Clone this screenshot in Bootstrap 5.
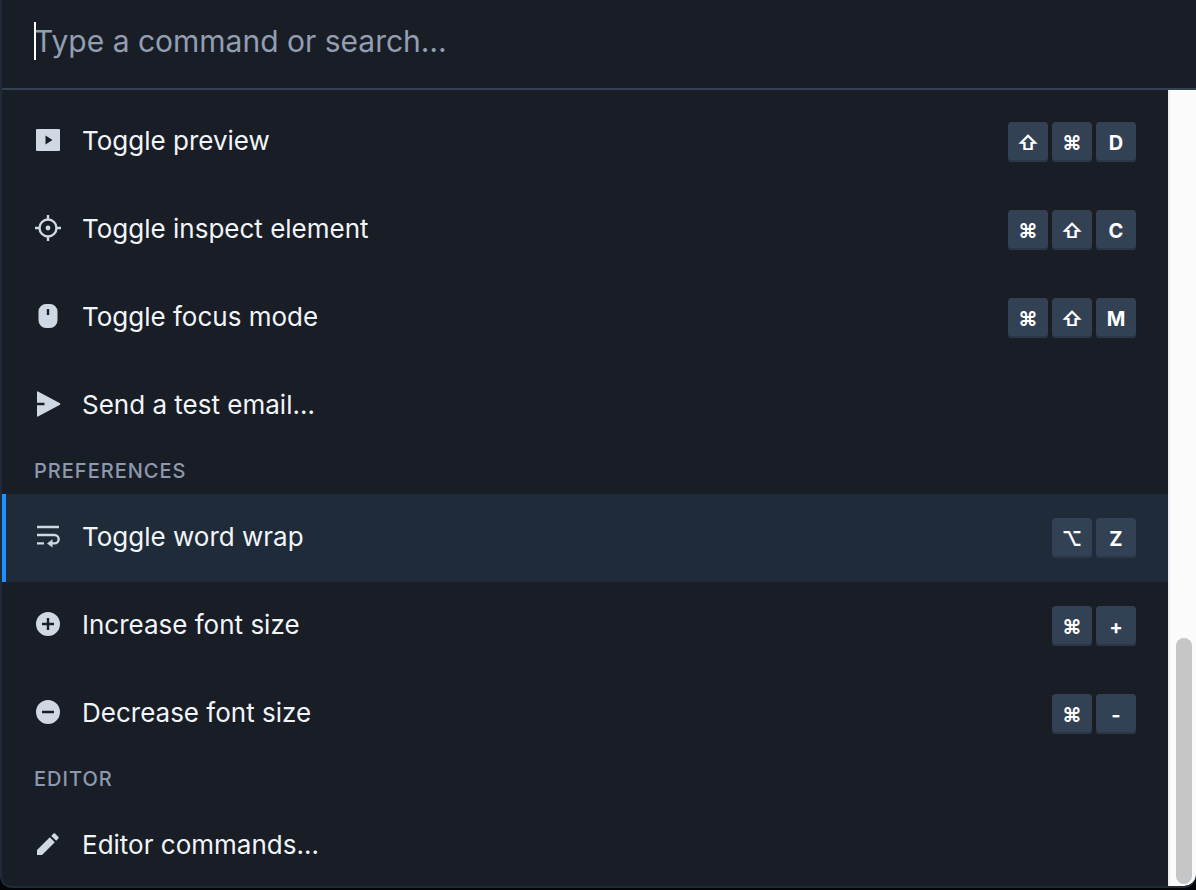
<!DOCTYPE html>
<html lang="en" data-bs-theme="dark">
<head>
<meta charset="utf-8">
<meta name="viewport" content="width=device-width, initial-scale=1">
<title>Command palette</title>
<link rel="stylesheet" href="https://cdn.jsdelivr.net/npm/bootstrap@5.3.0/dist/css/bootstrap.min.css">
<style>
  body { background: #020408; font-family: Inter, "Liberation Sans", sans-serif; padding-bottom: 2px; }
  .palette { background: #191d25; border: solid #1f2b3a; border-width: 0 0 2px 2px; border-radius: 0 0 12px 12px; }
  .search-bar { height: 90px; padding: 0 32px 6px; border-bottom: 2px solid #334155; }
  .search-bar::before { content: ""; position: absolute; left: 32px; top: 22px; width: 2px; height: 38px; background: #fff; }
  .search-input, .search-input:focus { font-size: 30px; line-height: 40px; color: #fff; background: transparent; caret-color: transparent; box-shadow: none; }
  .search-input::placeholder { color: #929eb2; opacity: 1; }
  .command-list { padding-top: 8px; min-width: 0; }
  .group-title { height: 44px; padding: 0 32px 2px; font-size: 20px; line-height: 24px; font-weight: 500; letter-spacing: 1px; color: #8d99ae; }
  .command { height: 88px; padding: 0 32px 4px 28px; border: solid transparent; border-width: 0 0 0 4px; background: transparent; color: #f1f5f9; font-size: 26px; line-height: 32px; text-align: left; }
  .command.active { background: #1f2b38; border-color: #1e90ff; }
  .command svg { width: 28px; height: 28px; fill: #cfd8e3; }
  .command-label { margin-left: 20px; padding-top: 2px; }
  .keys { gap: 4px; }
  .keys kbd { width: 40px; height: 40px; padding: 0; border-radius: 4px; background: #334155; box-shadow: inset 0 -2px #2b3748; color: #fff; font: 700 20px/42px Inter, "DejaVu Sans", sans-serif; text-align: center; }
  .scroll-track { width: 28px; background: #fbfbfb; border-left: 2px solid #ededed; padding: 0 4px 2px 6px; border-radius: 0 0 12px 0; }
  .scroll-thumb { height: 31%; border-radius: 8px; background: #c5c6c8; }
</style>
</head>
<body class="vh-100 overflow-hidden">
<main class="palette h-100 d-flex flex-column overflow-hidden">
  <div class="search-bar position-relative d-flex align-items-center flex-shrink-0">
    <input class="search-input form-control border-0 rounded-0 p-0" type="text" aria-label="Command search" placeholder="Type a command or search…">
  </div>
  <div class="d-flex flex-grow-1 overflow-hidden">
    <div class="command-list flex-grow-1 overflow-hidden">
      <section>
        <button type="button" class="command w-100 d-flex align-items-center">
          <svg viewBox="0 0 28 28" aria-hidden="true"><path fill-rule="evenodd" d="M3 3h22q1 0 1 1v20q0 1-1 1H3q-1 0-1-1V4q0-1 1-1zm8.500 6.500v9l7-4.500z"/></svg>
          <span class="command-label">Toggle preview</span>
          <span class="keys d-flex ms-auto mt-1"><kbd>⇧</kbd><kbd>⌘</kbd><kbd>D</kbd></span>
        </button>
        <button type="button" class="command w-100 d-flex align-items-center">
          <svg viewBox="0 0 28 28" aria-hidden="true"><g fill="none" stroke="#cfd8e3" stroke-width="2.400"><circle cx="14" cy="14" r="8.500"/><path d="M14 1v5M14 22v5M1 14h5M22 14h5"/></g><circle cx="14" cy="14" r="2.400"/></svg>
          <span class="command-label">Toggle inspect element</span>
          <span class="keys d-flex ms-auto mt-1"><kbd>⌘</kbd><kbd>⇧</kbd><kbd>C</kbd></span>
        </button>
        <button type="button" class="command w-100 d-flex align-items-center">
          <svg viewBox="0 0 28 28" aria-hidden="true"><path fill-rule="evenodd" d="M12 2h4a7.500 7.500 0 0 1 7.500 7.500v9A7.500 7.500 0 0 1 16 26h-4a7.500 7.500 0 0 1-7.500-7.500v-9A7.500 7.500 0 0 1 12 2zm.8 5v6h2.400V7z"/></svg>
          <span class="command-label">Toggle focus mode</span>
          <span class="keys d-flex ms-auto mt-1"><kbd>⌘</kbd><kbd>⇧</kbd><kbd>M</kbd></span>
        </button>
        <button type="button" class="command w-100 d-flex align-items-center">
          <svg viewBox="0 0 28 28" aria-hidden="true"><path d="M3 2q0-1 1-.6L26 13.300q.6.700 0 1.400L4 26.600q-1 .4-1-.6V15.200h7.500v-2.400H3z"/></svg>
          <span class="command-label">Send a test email…</span>
        </button>
      </section>
      <section>
        <h2 class="group-title d-flex align-items-center m-0">PREFERENCES</h2>
        <button type="button" class="command active w-100 d-flex align-items-center">
          <svg viewBox="0 0 28 28" aria-hidden="true"><path fill="none" stroke="#cfd8e3" stroke-width="2.400" d="M3 5h22M3 13h17.500a4.200 4.200 0 0 1 0 8.400H17M3 21.400h7"/><path d="M18.500 17.200v8.400L13 21.400z"/></svg>
          <span class="command-label">Toggle word wrap</span>
          <span class="keys d-flex ms-auto mt-1"><kbd>⌥</kbd><kbd>Z</kbd></span>
        </button>
        <button type="button" class="command w-100 d-flex align-items-center">
          <svg viewBox="0 0 28 28" aria-hidden="true"><path fill-rule="evenodd" d="M14 2a12 12 0 1 0 0 24a12 12 0 0 0 0-24zm-1.200 6h2.400v4.800H20v2.400h-4.800V20h-2.400v-4.800H8v-2.400h4.800z"/></svg>
          <span class="command-label">Increase font size</span>
          <span class="keys d-flex ms-auto mt-1"><kbd>⌘</kbd><kbd>+</kbd></span>
        </button>
        <button type="button" class="command w-100 d-flex align-items-center">
          <svg viewBox="0 0 28 28" aria-hidden="true"><path fill-rule="evenodd" d="M14 2a12 12 0 1 0 0 24a12 12 0 0 0 0-24zM8 12.800h12v2.400H8z"/></svg>
          <span class="command-label">Decrease font size</span>
          <span class="keys d-flex ms-auto mt-1"><kbd>⌘</kbd><kbd>-</kbd></span>
        </button>
      </section>
      <section>
        <h2 class="group-title d-flex align-items-center m-0">EDITOR</h2>
        <button type="button" class="command w-100 d-flex align-items-center">
          <svg viewBox="0 0 28 28" aria-hidden="true"><path d="M3 20L15.800 7.300l5 5L8 25H3zM17.200 5.900L19.500 3.600q.8-.8 1.600 0l3.300 3.300q.8.800 0 1.600l-2.200 2.300z"/></svg>
          <span class="command-label">Editor commands…</span>
        </button>
      </section>
    </div>
    <div class="scroll-track d-flex flex-column justify-content-end flex-shrink-0" aria-hidden="true">
      <div class="scroll-thumb"></div>
    </div>
  </div>
</main>
<script src="https://cdn.jsdelivr.net/npm/bootstrap@5.3.0/dist/js/bootstrap.bundle.min.js"></script>
</body>
</html>
